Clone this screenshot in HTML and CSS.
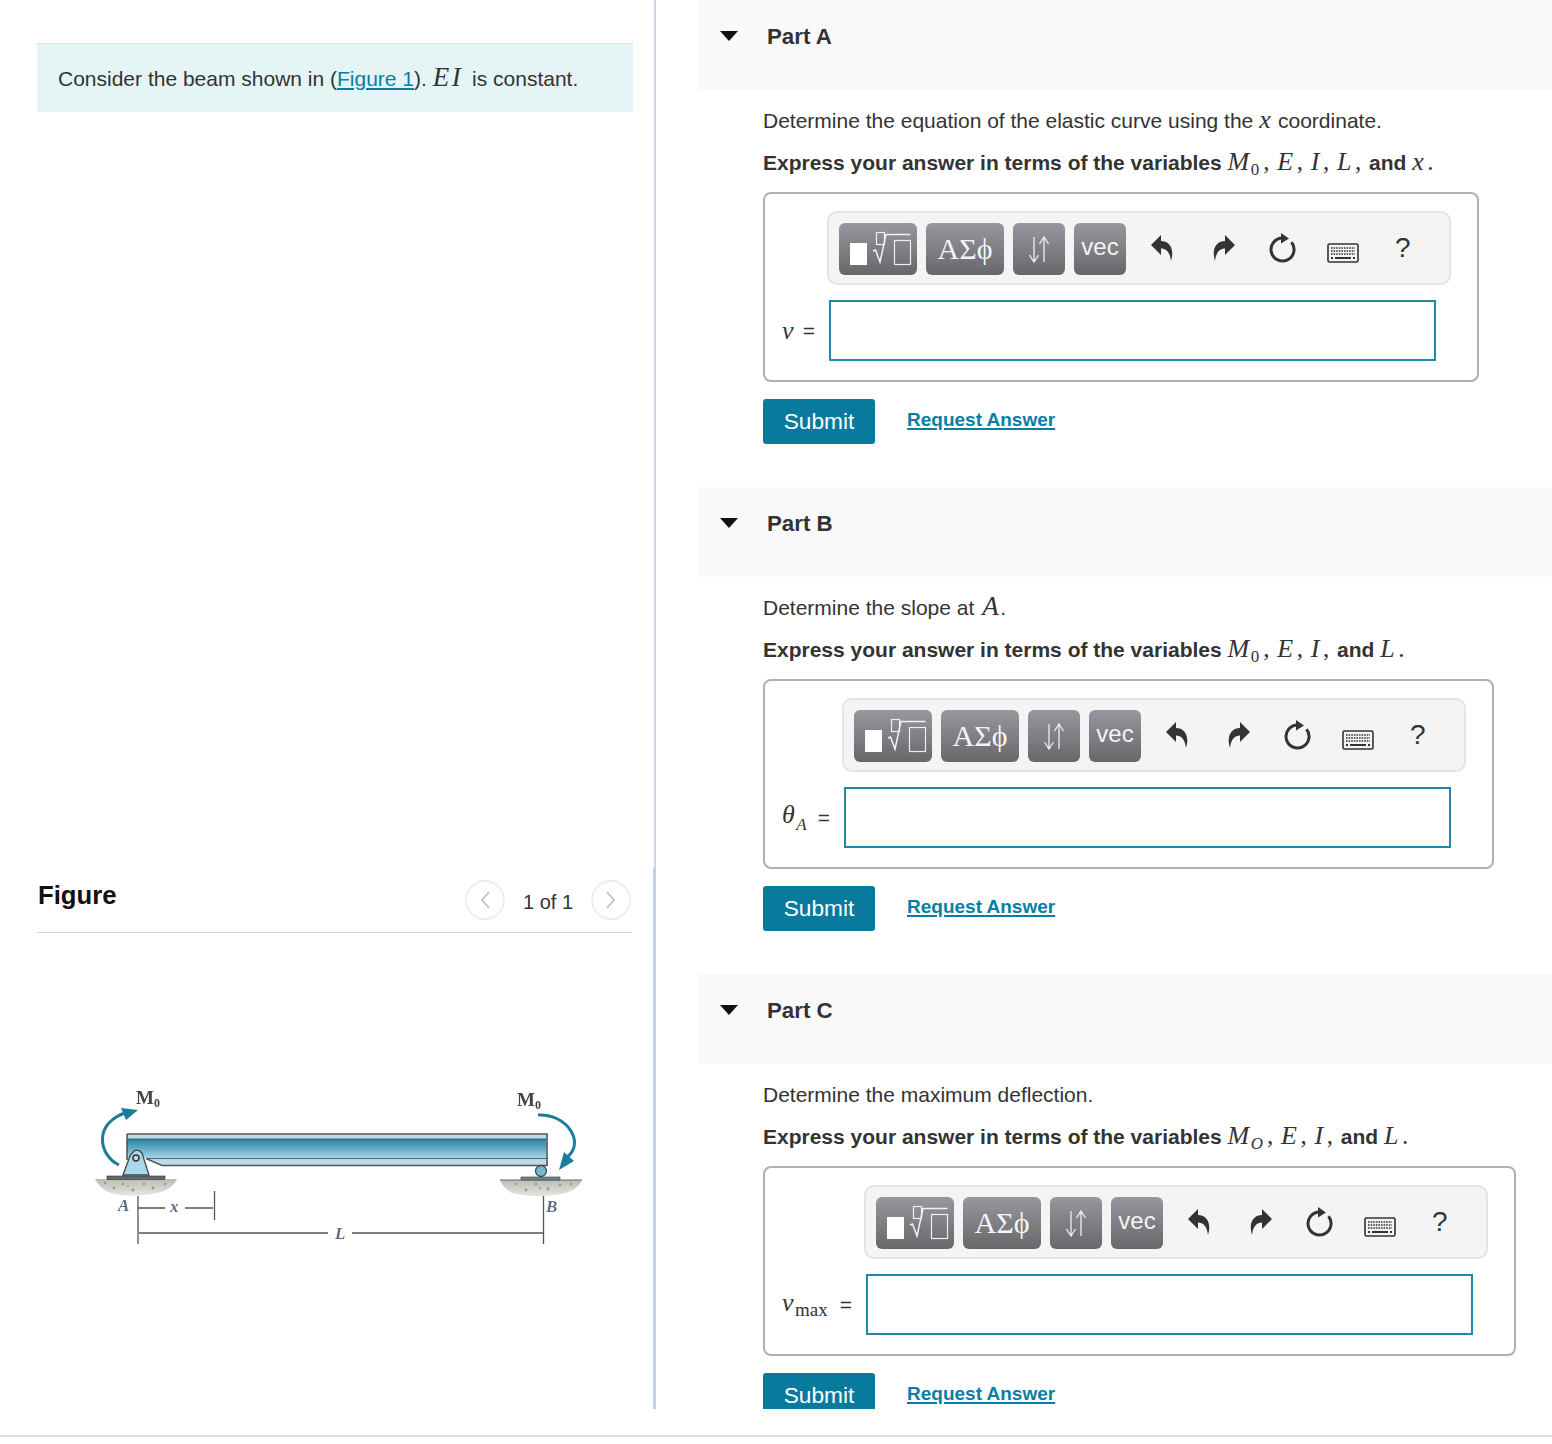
FILE: index.html
```html
<!DOCTYPE html>
<html lang="en">
<head>
  <meta charset="UTF-8" />
  <title>Beam Deflection</title>
  <meta name="viewport" content="width=device-width, initial-scale=1.0" />
  <link rel="stylesheet" href="styles.css">
</head>
<body>

  <!-- toolbar icons, reused in every part -->
  <svg class="icon-defs" width="0" height="0">
    <symbol id="i-templates" viewBox="0 0 78 52">
      <rect x="11" y="20" width="17" height="22" fill="#fff" />
      <rect x="37.500" y="9.500" width="8" height="12" fill="none" stroke="#eee" stroke-width="1.200" />
      <path d="M34 28 L36.500 27 L41 39 L47 11.500 H71.500" fill="none" stroke="#f2f2f2" stroke-width="1.500" />
      <rect x="55.500" y="17.500" width="16" height="24" fill="none" stroke="#eee" stroke-width="1.200" />
    </symbol>
    <symbol id="i-arrows" viewBox="0 0 52 52">
      <path d="M21 14 V39 M16.500 32 L21 39 L25.500 32 M31 39 V14 M26.500 21 L31 14 L35.500 21" fill="none" stroke="#eee" stroke-width="1.300" />
    </symbol>
    <symbol id="i-undo" viewBox="0 0 22 26">
      <path d="M0 10 L10 0 V6 C18 6 24 13 20 26 C19 17 15 13.5 10 13.5 V20 Z" fill="#333" />
    </symbol>
    <symbol id="i-redo" viewBox="0 0 22 26">
      <path d="M22 10 L12 0 V6 C4 6 -2 13 2 26 C3 17 7 13.5 12 13.5 V20 Z" fill="#333" />
    </symbol>
    <symbol id="i-reset" viewBox="0 0 28 30">
      <path d="M13.500 5 A11.500 11.500 0 1 0 22.500 9.300" fill="none" stroke="#333" stroke-width="3" />
      <path d="M12 0 L20 5.500 L12 10.500 Z" fill="#333" />
    </symbol>
    <symbol id="i-keyboard" viewBox="0 0 32 20">
      <rect x="1" y="1" width="30" height="18" rx="1.500" fill="#f4f4f4" stroke="#333" stroke-width="1.600" />
      <path d="M4 5 H28 M4 8 H28 M4 11 H28" stroke="#333" stroke-width="1.400" stroke-dasharray="1.600 1" />
      <path d="M8 15 H24 M4 15 H6 M26 15 H28" stroke="#333" stroke-width="1.800" />
    </symbol>
  </svg>

  <div class="page">

    <div class="left-col">
      <div class="intro">
        Consider the beam shown in (<a href="#">Figure 1</a>). <span class="m m-big">EI</span> is constant.
      </div>

      <div class="figure-head">
        <h2>Figure</h2>
        <div class="pager">
          <span class="pager-btn">
            <svg width="12" height="20" viewBox="0 0 12 20"><path d="M10 2 L3 10 L10 18" fill="none" stroke="#bbb" stroke-width="1.600" /></svg>
          </span>
          <span class="pager-text">1 of 1</span>
          <span class="pager-btn">
            <svg width="12" height="20" viewBox="0 0 12 20"><path d="M2 2 L9 10 L2 18" fill="none" stroke="#bbb" stroke-width="1.600" /></svg>
          </span>
        </div>
      </div>

      <svg class="beam" width="520" height="170" viewBox="80 1080 520 170">
        <defs>
          <linearGradient id="web" x1="0" y1="0" x2="0" y2="1">
            <stop offset="0" stop-color="#23819f" />
            <stop offset="1" stop-color="#a8d4e6" />
          </linearGradient>
          <linearGradient id="soil" x1="0" y1="0" x2="0" y2="1">
            <stop offset="0" stop-color="#bcbcb2" />
            <stop offset="1" stop-color="#e6e6e0" />
          </linearGradient>
        </defs>

        <!-- ground -->
        <path d="M95 1179 H177 Q172 1191 152 1194 Q130 1198 110 1193 Q99 1188 95 1179 Z" fill="url(#soil)" />
        <path d="M500 1180 H582 Q577 1192 556 1195 Q530 1198 512 1193 Q503 1188 500 1180 Z" fill="url(#soil)" />
        <g fill="#98988f">
          <circle cx="105" cy="1183" r="1.200" /><circle cx="114" cy="1188" r="1.400" /><circle cx="123" cy="1184" r="1.200" />
          <circle cx="133" cy="1190" r="1.400" /><circle cx="144" cy="1184" r="1.200" /><circle cx="153" cy="1188" r="1.400" />
          <circle cx="165" cy="1184" r="1.200" /><circle cx="516" cy="1184" r="1.200" /><circle cx="526" cy="1190" r="1.400" />
          <circle cx="536" cy="1184" r="1.200" /><circle cx="548" cy="1189" r="1.400" /><circle cx="560" cy="1185" r="1.200" />
          <circle cx="571" cy="1184" r="1.200" /><circle cx="128" cy="1186" r="1" /><circle cx="540" cy="1188" r="1" />
        </g>

        <!-- beam -->
        <path d="M127 1135 H547 V1165 H163 L147 1158 H127 Z" fill="#bcdcea" />
        <rect x="127" y="1139" width="419" height="19" fill="url(#web)" />
        <path d="M127 1134 H547 V1165.500 H162 L146 1158.500 M127 1134 V1160" fill="none" stroke="#555" stroke-width="1.600" />
        <path d="M127 1139 H547 M146 1158.500 H547" fill="none" stroke="#4b6672" stroke-width="1.200" />

        <!-- supports -->
        <path d="M123 1175 L130 1156 Q136 1146 142 1153 L149 1175 Z" fill="#a9d8ee" stroke="#444" stroke-width="1.300" />
        <circle cx="136" cy="1158" r="3" fill="#c8d8dd" stroke="#333" stroke-width="1.500" />
        <rect x="107" y="1176" width="58" height="3.500" fill="#5e6a70" stroke="#333" stroke-width=".6" />
        <circle cx="541" cy="1171" r="5.500" fill="#79b8d0" stroke="#444" stroke-width="1.300" />
        <rect x="521" y="1177" width="39" height="3" fill="#6d8a96" stroke="#333" stroke-width=".6" />
        <path d="M500 1180 H582" stroke="#666" stroke-width="1" />

        <!-- moments -->
        <path d="M119 1165 C98 1155 93 1122 128 1112" fill="none" stroke="#1b7c9c" stroke-width="3" />
        <path d="M138 1110 L121 1108 L126 1120 Z" fill="#1b7c9c" />
        <path d="M538 1115 C566 1113 587 1143 566 1158" fill="none" stroke="#1b7c9c" stroke-width="3" />
        <path d="M559 1170 L564 1152 L574 1161 Z" fill="#1b7c9c" />

        <!-- dimensions -->
        <path d="M138 1196 V1244 M214.500 1191 V1220 M138 1208 H165 M185 1208 H213 M139 1233 H328 M352 1233 H543 M543.500 1196 V1244" fill="none" stroke="#555" stroke-width="1.300" />

        <g class="fig-math">
          <text x="118" y="1211">A</text>
          <text x="170" y="1212">x</text>
          <text x="335" y="1239">L</text>
          <text x="546" y="1212">B</text>
        </g>
        <g class="fig-moment">
          <text x="136" y="1104">M<tspan font-size="12" dy="3">0</tspan></text>
          <text x="517" y="1106">M<tspan font-size="12" dy="3">0</tspan></text>
        </g>
      </svg>
    </div>

    <div class="right-col">

      <section class="part">
        <div class="part-head"><span class="caret"></span><h3>Part A</h3></div>
        <div class="part-body">
          <p class="prompt">Determine the equation of the elastic curve using the <span class="m">x</span> coordinate.</p>
          <p class="prompt prompt-bold">Express your answer in terms of the variables <span class="m">M</span><sub class="mn">0</sub><span class="pn">,</span> <span class="m">E</span><span class="pn">,</span> <span class="m">I</span><span class="pn">,</span> <span class="m">L</span><span class="pn">,</span> and <span class="m">x</span><span class="pn">.</span></p>
          <div class="answer-box">
            <div class="toolbar">
              <span class="tool tool-wide"><svg width="78" height="52"><use href="#i-templates" /></svg></span>
              <span class="tool tool-wide tool-greek">ΑΣϕ</span>
              <span class="tool tool-narrow"><svg width="52" height="52"><use href="#i-arrows" /></svg></span>
              <span class="tool tool-narrow tool-vec">vec</span>
              <svg class="ic-undo" width="22" height="26"><use href="#i-undo" /></svg>
              <svg class="ic-redo" width="22" height="26"><use href="#i-redo" /></svg>
              <svg class="ic-reset" width="28" height="30"><use href="#i-reset" /></svg>
              <svg class="ic-keys" width="32" height="20"><use href="#i-keyboard" /></svg>
              <span class="ic-help">?</span>
            </div>
            <div class="answer-row">
              <label class="answer-label label-v"><span class="m">v</span><span>=</span></label>
              <input type="text" class="answer-input" />
            </div>
          </div>
          <div class="actions">
            <button type="button">Submit</button>
            <a href="#">Request Answer</a>
          </div>
        </div>
      </section>

      <section class="part">
        <div class="part-head"><span class="caret"></span><h3>Part B</h3></div>
        <div class="part-body">
          <p class="prompt">Determine the slope at <span class="m m-letter">A</span>.</p>
          <p class="prompt prompt-bold">Express your answer in terms of the variables <span class="m">M</span><sub class="mn">0</sub><span class="pn">,</span> <span class="m">E</span><span class="pn">,</span> <span class="m">I</span><span class="pn">,</span> and <span class="m">L</span><span class="pn">.</span></p>
          <div class="answer-box">
            <div class="toolbar">
              <span class="tool tool-wide"><svg width="78" height="52"><use href="#i-templates" /></svg></span>
              <span class="tool tool-wide tool-greek">ΑΣϕ</span>
              <span class="tool tool-narrow"><svg width="52" height="52"><use href="#i-arrows" /></svg></span>
              <span class="tool tool-narrow tool-vec">vec</span>
              <svg class="ic-undo" width="22" height="26"><use href="#i-undo" /></svg>
              <svg class="ic-redo" width="22" height="26"><use href="#i-redo" /></svg>
              <svg class="ic-reset" width="28" height="30"><use href="#i-reset" /></svg>
              <svg class="ic-keys" width="32" height="20"><use href="#i-keyboard" /></svg>
              <span class="ic-help">?</span>
            </div>
            <div class="answer-row">
              <label class="answer-label label-theta"><span class="m">θ<sub>A</sub></span><span>=</span></label>
              <input type="text" class="answer-input" />
            </div>
          </div>
          <div class="actions">
            <button type="button">Submit</button>
            <a href="#">Request Answer</a>
          </div>
        </div>
      </section>

      <section class="part">
        <div class="part-head"><span class="caret"></span><h3>Part C</h3></div>
        <div class="part-body">
          <p class="prompt">Determine the maximum deflection.</p>
          <p class="prompt prompt-bold">Express your answer in terms of the variables <span class="m">M</span><sub class="m">O</sub><span class="pn">,</span> <span class="m">E</span><span class="pn">,</span> <span class="m">I</span><span class="pn">,</span> and <span class="m">L</span><span class="pn">.</span></p>
          <div class="answer-box">
            <div class="toolbar">
              <span class="tool tool-wide"><svg width="78" height="52"><use href="#i-templates" /></svg></span>
              <span class="tool tool-wide tool-greek">ΑΣϕ</span>
              <span class="tool tool-narrow"><svg width="52" height="52"><use href="#i-arrows" /></svg></span>
              <span class="tool tool-narrow tool-vec">vec</span>
              <svg class="ic-undo" width="22" height="26"><use href="#i-undo" /></svg>
              <svg class="ic-redo" width="22" height="26"><use href="#i-redo" /></svg>
              <svg class="ic-reset" width="28" height="30"><use href="#i-reset" /></svg>
              <svg class="ic-keys" width="32" height="20"><use href="#i-keyboard" /></svg>
              <span class="ic-help">?</span>
            </div>
            <div class="answer-row">
              <label class="answer-label label-vmax"><span><span class="m">v</span><sub class="mn">max</sub></span><span>=</span></label>
              <input type="text" class="answer-input" />
            </div>
          </div>
          <div class="actions">
            <button type="button">Submit</button>
            <a href="#">Request Answer</a>
          </div>
        </div>
      </section>

    </div>
  </div>

  <div class="page-foot"></div>

</body>
</html>
```

FILE: styles.css
```css
* {
  box-sizing: border-box;
}

body {
  margin: 0;
  font-family: "Liberation Sans", Arial, sans-serif;
  font-size: 21px;
  color: #333;
  background: white;
}

a {
  color: #087ea4;
  text-decoration-thickness: 1.5px;
  text-underline-offset: 2px;
}

.icon-defs {
  position: absolute;
}

.page {
  display: flex;
  height: 1409px;
  overflow: hidden;
}

.page-foot {
  margin-top: 26px;
  border-top: 2px solid #ddd;
  height: 9px;
}

/* math */
.m {
  font-family: "Liberation Serif", "Times New Roman", serif;
  font-style: italic;
  font-weight: normal;
  font-size: 26px;
  line-height: 1;
  letter-spacing: 1.5px;
}

.m-big {
  margin-right: 3px;
  font-size: 27px;
  letter-spacing: 2.5px;
}

.m-letter {
  margin-left: 2px;
  font-size: 27px;
}

.m sub,
sub.m,
sub.mn {
  margin-right: 2px;
  font-size: 17px;
  line-height: 1;
  letter-spacing: 0;
}

.mn,
.pn {
  font-family: "Liberation Serif", "Times New Roman", serif;
  font-weight: normal;
}

.pn {
  margin: 0 2px;
  font-size: 25px;
  line-height: 1;
}

/* left column */
.left-col {
  position: relative;
  width: 656px;
  flex-shrink: 0;
  padding: 43px 0 0 37px;
  border-right: 2px solid #c6d6e6;
}

.left-col::after {
  content: "";
  position: absolute;
  right: -2px;
  bottom: 0;
  width: 3px;
  height: 541px;
  background: #c0d2e3;
}

.intro {
  width: 596px;
  height: 69px;
  padding: 20px 21px 0;
  line-height: 30px;
  background: #e5f5f6;
  border-top: 1px solid #ddd;
}

.figure-head {
  display: flex;
  justify-content: space-between;
  width: 595px;
  height: 53px;
  margin-top: 768px;
  border-bottom: 1px solid #d5d9dc;
}

.figure-head h2 {
  margin: 0 0 0 1px;
  font-size: 25.700px;
  line-height: 30px;
  color: #111;
}

.pager {
  display: flex;
  align-items: flex-start;
  margin-right: 1px;
  font-size: 20px;
}

.pager-btn {
  display: flex;
  align-items: center;
  justify-content: center;
  width: 40px;
  height: 40px;
  border: 2px solid #eee;
  border-radius: 50%;
}

.pager-text {
  width: 86px;
  padding-top: 9px;
  text-align: center;
  line-height: 26px;
}

.beam {
  display: block;
  margin: 147px 0 0 43px;
  filter: blur(0.5px);
}

.fig-math {
  font-family: "Liberation Serif", serif;
  font-style: italic;
  font-weight: bold;
  font-size: 17px;
  fill: #5c6f86;
}

.fig-moment {
  font-family: "Liberation Serif", serif;
  font-weight: bold;
  font-size: 19px;
  fill: #444;
}

/* right column */
.right-col {
  flex: 1;
  padding-left: 42px;
}

.part {
  height: 487px;
}

.part-head {
  display: flex;
  height: 90px;
  padding-top: 22px;
  background: #f9f9f9;
}

.part-head h3 {
  margin: 0 0 0 29px;
  font-size: 22.300px;
  line-height: 29px;
}

.caret {
  width: 0;
  height: 0;
  margin: 9px 0 0 22px;
  border-left: 9px solid transparent;
  border-right: 9px solid transparent;
  border-top: 10px solid #111;
}

.part-body {
  padding-left: 65px;
}

.prompt {
  margin: 0;
  padding-top: 16px;
  height: 46px;
  line-height: 30px;
}

.prompt-bold {
  height: 40px;
  padding-top: 12px;
  font-weight: bold;
}

.answer-box {
  width: fit-content;
  margin-top: 16px;
  padding: 17px 26px 19px 17px;
  border: 2px solid #b0b0b0;
  border-radius: 8px;
}

.toolbar {
  display: flex;
  align-items: center;
  width: 624px;
  height: 74px;
  margin-left: auto;
  padding-left: 10px;
  background: #f4f4f4;
  border: 2px solid #e4e4e4;
  border-radius: 10px;
}

.tool {
  display: flex;
  align-items: center;
  justify-content: center;
  height: 52px;
  margin: 2px 9px 0 0;
  color: #f4f4f4;
  background: linear-gradient(#98979f, #67676a);
  border-radius: 6px;
}

.tool-wide {
  width: 78px;
}

.tool-narrow {
  width: 52px;
}

.tool-greek {
  font-family: "Liberation Serif", serif;
  font-size: 30px;
}

.tool-vec {
  padding-bottom: 4px;
  font-size: 24px;
}

.ic-undo {
  margin-left: 16px;
}

.ic-redo {
  margin-left: 40px;
}

.ic-reset {
  margin-left: 34px;
}

.ic-keys {
  margin-left: 30px;
  margin-top: 9px;
}

.ic-help {
  margin-left: 36px;
  font-size: 28px;
}

.answer-row {
  display: flex;
  align-items: center;
  margin-top: 15px;
  padding-right: 15px;
}

.answer-label {
  display: flex;
  align-items: center;
  justify-content: space-between;
  padding-right: 14px;
  white-space: nowrap;
}

.label-v {
  width: 47px;
}

.label-theta {
  width: 62px;
}

.label-vmax {
  width: 84px;
}

.label-vmax sub {
  font-size: 19px;
}

.answer-input {
  width: 607px;
  height: 61px;
  border: 2px solid #2089a6;
}

.actions {
  display: flex;
  align-items: flex-start;
  margin-top: 17px;
}

button {
  width: 112px;
  height: 45px;
  padding-top: 1px;
  font-family: inherit;
  font-size: 22.700px;
  color: white;
  background: #087a9e;
  border: none;
  border-radius: 3px;
}

.actions a {
  margin: 7px 0 0 32px;
  font-size: 19px;
  font-weight: bold;
  line-height: 28px;
}
```
